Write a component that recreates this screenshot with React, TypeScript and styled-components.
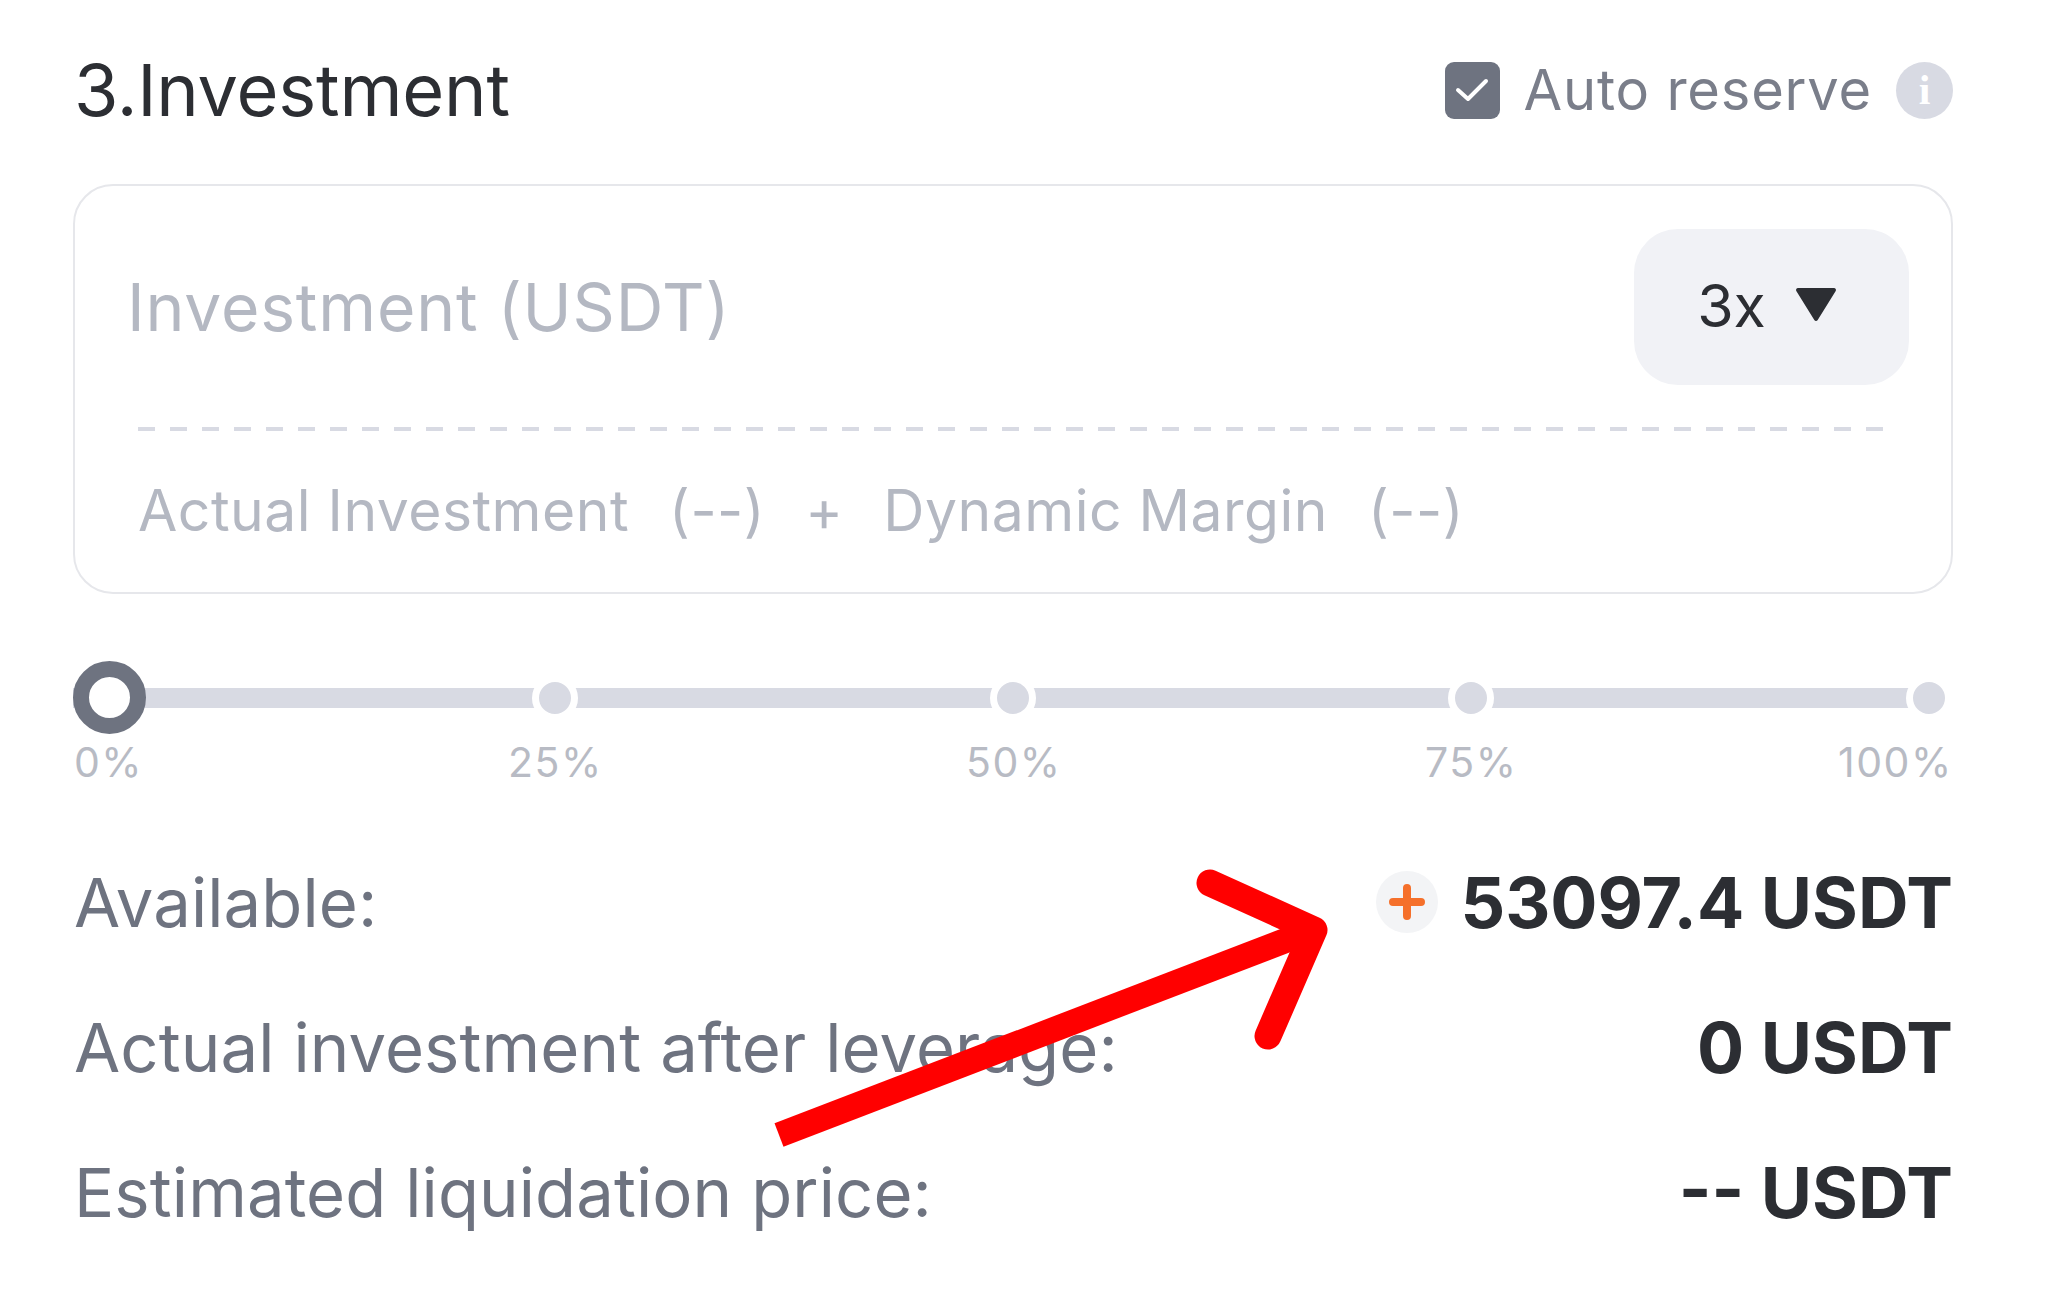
import styled, { createGlobalStyle } from "styled-components";

const GlobalStyle = createGlobalStyle`
  html, body {
    margin: 0;
    background: #ffffff;
  }
  body {
    font-family: Inter, "Liberation Sans", sans-serif;
  }
`;

const App = (): JSX.Element => {
  return (
    <Page>
      <GlobalStyle />
      <Header>
        <Title>3.Investment</Title>
        <AutoReserve>
          <CheckBox>
            <svg width="36" height="28" viewBox="0 0 36 28" fill="none">
              <path d="M4 14l10 9L32 5" stroke="#fff" strokeWidth="4" strokeLinecap="round" strokeLinejoin="round" />
            </svg>
          </CheckBox>
          <AutoLabel>Auto reserve</AutoLabel>
          <InfoIcon>i</InfoIcon>
        </AutoReserve>
      </Header>

      <Card>
        <InputRow>
          <Placeholder>Investment (USDT)</Placeholder>
          <LeverageButton>
            3x
            <svg width="44" height="36" viewBox="0 0 44 36">
              <path d="M4 1h36a2 2 0 0 1 1.700 3L23.700 33a2 2 0 0 1-3.400 0L2.300 4A2 2 0 0 1 4 1z" fill="#2c2e33" />
            </svg>
          </LeverageButton>
        </InputRow>
        <Divider />
        <Breakdown>
          <span>Actual Investment</span>
          <span>(--)</span>
          <span>+</span>
          <span>Dynamic Margin</span>
          <span>(--)</span>
        </Breakdown>
      </Card>

      <Slider>
        <Track>
          <Thumb />
          <Dot />
          <Dot />
          <Dot />
          <Dot />
        </Track>
        <Ticks>
          <span>0%</span>
          <span>25%</span>
          <span>50%</span>
          <span>75%</span>
          <span>100%</span>
        </Ticks>
      </Slider>

      <Rows>
        <Row>
          <RowLabel>Available:</RowLabel>
          <Value>
            <PlusBadge>
              <svg width="38" height="38" viewBox="0 0 38 38">
                <path d="M19 5v28M5 19h28" stroke="#f5702b" strokeWidth="8" strokeLinecap="round" />
              </svg>
            </PlusBadge>
            53097.4 USDT
          </Value>
        </Row>
        <Row>
          <RowLabel>Actual investment after leverage:</RowLabel>
          <Value>0 USDT</Value>
        </Row>
        <Row>
          <RowLabel>Estimated liquidation price:</RowLabel>
          <Value>-- USDT</Value>
        </Row>
      </Rows>

      {/* red annotation drawn on top of the screenshot */}
      <Arrow viewBox="0 0 2048 1295">
        <path d="M779 1135L1313 930" stroke="#ff0000" strokeWidth="25" fill="none" />
        <path
          d="M1210 883L1314 930L1268 1036"
          stroke="#ff0000"
          strokeWidth="27"
          strokeLinecap="round"
          strokeLinejoin="round"
          fill="none"
        />
      </Arrow>
    </Page>
  );
};

export default App;

const Page = styled.div`
  position: relative;
  width: 2048px;
  height: 1295px;
  box-sizing: border-box;
  padding: 50px 95px 0 73px;
  overflow: hidden;
  color: #2c2e33;
`;

const Header = styled.div`
  display: flex;
  justify-content: space-between;
  align-items: center;
  height: 80px;
`;

const Title = styled.h1`
  margin: 0 0 0 1px;
  font-size: 72px;
  font-weight: 400;
  line-height: 80px;
  letter-spacing: -0.2px;
  color: #2c2e33;
`;

const AutoReserve = styled.div`
  display: flex;
  align-items: center;
`;

const CheckBox = styled.div`
  display: flex;
  align-items: center;
  justify-content: center;
  width: 55px;
  height: 57px;
  border-radius: 9px;
  background: #6e7380;
`;

const AutoLabel = styled.span`
  margin: 0 24px 0 24px;
  font-size: 56px;
  letter-spacing: 0.8px;
  color: #7a7e8a;
`;

const InfoIcon = styled.span`
  display: flex;
  align-items: center;
  justify-content: center;
  width: 57px;
  height: 57px;
  border-radius: 50%;
  background: #d8dae3;
  color: #ffffff;
  font-family: "Liberation Serif", serif;
  font-size: 42px;
  font-weight: 700;
`;

const Card = styled.div`
  box-sizing: border-box;
  height: 410px;
  margin-top: 54px;
  padding: 43px 42px 0 52px;
  border: 2px solid #e6e7eb;
  border-radius: 40px;
`;

const InputRow = styled.div`
  display: flex;
  justify-content: space-between;
  align-items: center;
`;

const Placeholder = styled.span`
  font-size: 66px;
  letter-spacing: 0.8px;
  color: #b4b8c2;
`;

const LeverageButton = styled.div`
  display: flex;
  align-items: center;
  justify-content: center;
  gap: 28px;
  box-sizing: border-box;
  width: 275px;
  height: 156px;
  padding: 0 8px 4px 0;
  border-radius: 44px;
  background: #f1f2f6;
  font-size: 59px;
  color: #2c2e33;
`;

const Divider = styled.div`
  height: 4px;
  margin: 42px 20px 0 11px;
  background: repeating-linear-gradient(to right, #d8dae3 0 17px, transparent 17px 32px);
`;

const Breakdown = styled.div`
  display: flex;
  gap: 40px;
  margin-top: 45px;
  padding-left: 11px;
  font-size: 57px;
  letter-spacing: 0.5px;
  color: #b4b8c2;
`;

const Slider = styled.div`
  margin-top: 67px;
`;

const Track = styled.div`
  position: relative;
  display: grid;
  grid-template-columns: 459px 458px 458px 458px 46px;
  align-items: center;
  height: 73px;

  &::before {
    content: "";
    position: absolute;
    left: 0;
    right: 30px;
    top: 27px;
    height: 20px;
    background: #d8dae3;
  }
`;

const Thumb = styled.div`
  position: relative;
  box-sizing: border-box;
  width: 73px;
  height: 73px;
  border: 16px solid #6e7380;
  border-radius: 50%;
  background: #ffffff;
`;

const Dot = styled.div`
  position: relative;
  box-sizing: border-box;
  width: 46px;
  height: 46px;
  border: 7px solid #ffffff;
  border-radius: 50%;
  background: #d8dae3;
`;

const Ticks = styled.div`
  display: grid;
  grid-template-columns: 434px 458px 459px 413px 1fr;
  margin: 3px 0 0 1px;
  font-size: 41px;
  letter-spacing: 1.5px;
  color: #b8bbc4;
`;

const Rows = styled.div`
  display: flex;
  flex-direction: column;
  gap: 65px;
  margin-top: 75px;
`;

const Row = styled.div`
  display: flex;
  justify-content: space-between;
  align-items: center;
  height: 80px;
  padding-left: 1px;
`;

const RowLabel = styled.span`
  font-size: 67px;
  letter-spacing: 0.1px;
  color: #6e7380;
`;

const Value = styled.span`
  display: flex;
  align-items: center;
  gap: 22px;
  font-size: 70px;
  font-weight: 700;
  color: #2c2e33;
`;

const PlusBadge = styled.span`
  display: flex;
  align-items: center;
  justify-content: center;
  width: 62px;
  height: 62px;
  border-radius: 50%;
  background: #f3f4f6;
`;

const Arrow = styled.svg`
  position: absolute;
  left: 0;
  top: 0;
  width: 2048px;
  height: 1295px;
  pointer-events: none;
`;
